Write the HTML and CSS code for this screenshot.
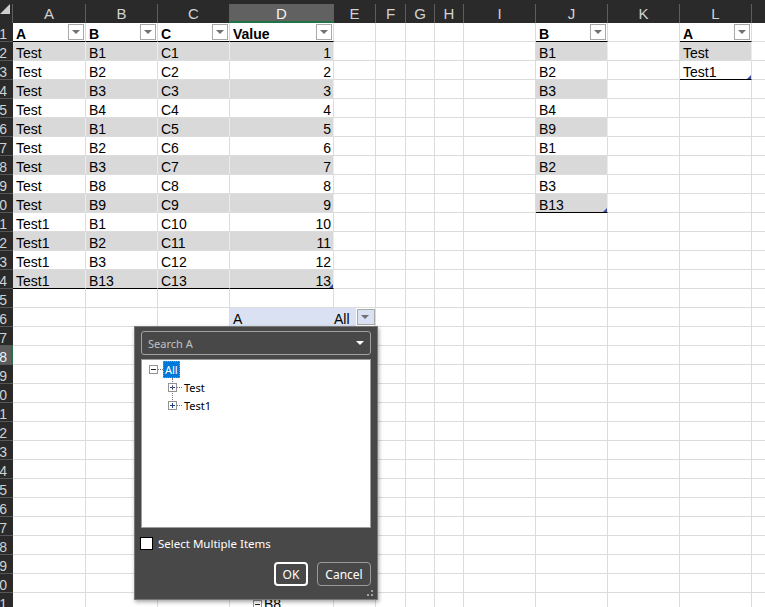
FILE: index.html
```html
<!DOCTYPE html>
<html>

<head>
    <title>Sheet1 - PivotTable Filter</title>
    <link rel="stylesheet" href="styles.css">
</head>

<body>
    <div id="sheet">
        <div id="colHeads" class="row heads"></div>
        <div id="grid"></div>

        <div id="filterMenu">
            <div class="search">
                <span>Search A</span>
                <span class="caret"></span>
            </div>
            <div class="tree">
                <div class="node">
                    <svg class="expander" width="9" height="9"><rect x="0.5" y="0.5" width="8" height="8" fill="#fff" stroke="#939393"/><path d="M2 4.5h5" stroke="#222"/></svg>
                    <span class="dots"></span>
                    <span class="label selected">All</span>
                </div>
                <div class="children">
                    <div class="node child">
                        <svg class="expander" width="9" height="9"><rect x="0.5" y="0.5" width="8" height="8" fill="#fff" stroke="#939393"/><path d="M2 4.5h5M4.5 2v5" stroke="#24418a"/></svg>
                        <span class="dots"></span>
                        <span class="label">Test</span>
                    </div>
                    <div class="node child">
                        <svg class="expander" width="9" height="9"><rect x="0.5" y="0.5" width="8" height="8" fill="#fff" stroke="#939393"/><path d="M2 4.5h5M4.5 2v5" stroke="#24418a"/></svg>
                        <span class="dots"></span>
                        <span class="label">Test1</span>
                    </div>
                </div>
            </div>
            <label class="multi"><span class="box"></span>Select Multiple Items</label>
            <div class="buttons">
                <button class="ok">OK</button>
                <button class="cancel">Cancel</button>
            </div>
            <svg class="grip" width="9" height="9"><rect x="6" y="1" width="2" height="2" fill="#a3a3a3"/><rect x="2" y="5" width="2" height="2" fill="#a3a3a3"/><rect x="6" y="5" width="2" height="2" fill="#a3a3a3"/></svg>
        </div>
    </div>

    <script>
        const colNames = ["A", "B", "C", "D", "E", "F", "G", "H", "I", "J", "K", "L", "M"];
        const rowCount = 31;

        const tables = [
            {
                col: 0, head: ["A", "B", "C", "Value"], rows: [
                    ["Test", "B1", "C1", 1],
                    ["Test", "B2", "C2", 2],
                    ["Test", "B3", "C3", 3],
                    ["Test", "B4", "C4", 4],
                    ["Test", "B1", "C5", 5],
                    ["Test", "B2", "C6", 6],
                    ["Test", "B3", "C7", 7],
                    ["Test", "B8", "C8", 8],
                    ["Test", "B9", "C9", 9],
                    ["Test1", "B1", "C10", 10],
                    ["Test1", "B2", "C11", 11],
                    ["Test1", "B3", "C12", 12],
                    ["Test1", "B13", "C13", 13]
                ]
            },
            {
                col: 9, head: ["B"], rows: [
                    ["B1"], ["B2"], ["B3"], ["B4"], ["B9"], ["B1"], ["B2"], ["B3"], ["B13"]
                ]
            },
            {
                col: 11, head: ["A"], rows: [["Test"], ["Test1"]]
            }
        ];

        const filterButton = '<span class="filter"></span>';
        const minusBox = '<svg class="expander" width="9" height="9"><rect x="0.5" y="0.5" width="8" height="8" fill="#fff" stroke="#939393"/><path d="M2 4.5h5" stroke="#222"/></svg>';

        const colHeads = document.getElementById("colHeads");
        const grid = document.getElementById("grid");

        colHeads.innerHTML = '<div class="corner"><svg width="12" height="19"><polygon points="10,4 10,14 0,14" fill="#cfcfcf"/></svg></div>'
            + colNames.map(c => `<div class="colhead${c === "D" ? " sel" : ""}">${c}</div>`).join("");

        // build the empty sheet
        const cells = [];
        for (let r = 1; r <= rowCount; r++) {
            const row = document.createElement("div");
            row.className = "row";
            row.innerHTML = `<div class="rowhead${r === 18 ? " sel" : ""}">${r}</div>`
                + colNames.map(() => '<div class="cell"></div>').join("");
            grid.appendChild(row);
            cells[r] = row.querySelectorAll(".cell");
        }

        // fill the tables
        tables.forEach(t => {
            t.head.forEach((h, i) => {
                const cell = cells[1][t.col + i];
                cell.classList.add("th");
                cell.innerHTML = `<span>${h}</span>${filterButton}`;
            });
            t.rows.forEach((values, r) => {
                values.forEach((v, i) => {
                    const cell = cells[r + 2][t.col + i];
                    cell.textContent = v;
                    if (r % 2 === 0) cell.classList.add("band");
                    if (typeof v === "number") cell.classList.add("num");
                    if (r === t.rows.length - 1) cell.classList.add("last");
                });
            });
            cells[t.rows.length + 1][t.col + t.head.length - 1].classList.add("handle");
        });

        // pivot table page field and first visible row label
        cells[16][3].classList.add("field");
        cells[16][3].textContent = "A";
        cells[16][4].classList.add("field-value");
        cells[16][4].innerHTML = `<span>All</span>${filterButton}`;
        cells[31][3].classList.add("pivot-row");
        cells[31][3].innerHTML = minusBox + "B8";
    </script>
</body>

</html>
```

FILE: styles.css
```css
body {
    margin: 0;
    background: #fff;
    overflow: hidden;
}

#sheet {
    position: relative;
    width: 765px;
    height: 607px;
    overflow: hidden;
    font-family: "Liberation Sans", Arial, sans-serif;
}

.row {
    display: grid;
    grid-template-columns: 13px 73px 72px 72px 104px 42px 30px 29px 29px 72px 72px 72px 72px 72px;
}

.heads {
    padding-top: 4px;
    background: #2a2a2a;
}

.corner,
.colhead {
    box-sizing: border-box;
    height: 19px;
    border-right: 1px solid #5e5e5e;
}

.corner svg {
    display: block;
    margin-top: -4px;
}

.colhead {
    color: #d2d2d2;
    font-size: 15px;
    line-height: 19px;
    text-align: center;
}

.colhead.sel {
    background: #616161;
    color: #f2f2f2;
    box-shadow: inset 0 -2px 0 #217346;
}

.rowhead {
    box-sizing: border-box;
    height: 19px;
    padding: 5px 6px 0 0;
    background: #2a2a2a;
    border-bottom: 1px solid #565656;
    color: #d2d2d2;
    font-size: 14px;
    line-height: 13px;
    display: flex;
    justify-content: flex-end;
    overflow: hidden;
}

.rowhead.sel {
    background: #5c5c5c;
    color: #f2f2f2;
    box-shadow: inset -2px 0 0 #217346;
}

.cell {
    position: relative;
    box-sizing: border-box;
    height: 19px;
    padding: 5px 3px 0;
    border-right: 1px solid #dcdcdc;
    border-bottom: 1px solid #dcdcdc;
    color: #000;
    font-size: 14px;
    line-height: 13px;
    white-space: nowrap;
    display: flex;
}

.cell.band {
    background: #d9d9d9;
    border-right-color: #ececec;
}

.cell.num {
    justify-content: flex-end;
    padding-right: 2px;
}

.cell.th {
    font-weight: bold;
    padding-right: 1px;
    border-bottom-color: #000;
}

.cell.last {
    border-bottom-color: #000;
}

.cell.handle::after {
    content: "";
    position: absolute;
    right: 0;
    bottom: 0;
    border-style: solid;
    border-width: 0 0 4px 4px;
    border-color: transparent transparent #3d4fa3 transparent;
}

.filter {
    position: relative;
    flex: none;
    box-sizing: border-box;
    width: 16px;
    height: 16px;
    margin: -4px 0 0 auto;
    border: 1px solid #a9a9a9;
    background: #fff;
}

.filter::after {
    content: "";
    position: absolute;
    left: 3px;
    top: 5px;
    border-style: solid;
    border-width: 4px 4px 0;
    border-color: #717171 transparent transparent;
}

.cell.field {
    background: #d9e1f2;
    border-right-color: #d9e1f2;
}

.cell.field-value {
    padding: 0;
}

.field-value span {
    flex: 1;
    padding: 5px 6px 0 0;
    background: #d9e1f2;
    text-align: right;
}

.field-value .filter {
    margin: 1px 0 0 1px;
}

.pivot-row {
    padding-left: 23px;
}

.pivot-row .expander {
    margin: 2px 2px 0 0;
}

#filterMenu {
    position: absolute;
    left: 134px;
    top: 326px;
    width: 244px;
    height: 274px;
    box-sizing: border-box;
    padding: 4px 6px;
    background: #484848;
    border: 1px solid #787878;
    box-shadow: 1px 2px 4px rgba(0, 0, 0, 0.35);
    color: #fff;
    font-family: "Noto Sans", sans-serif;
    font-size: 11px;
    display: flex;
    flex-direction: column;
}

.search {
    height: 24px;
    box-sizing: border-box;
    padding: 0 6px;
    border: 1px solid #a0a0a0;
    border-radius: 3px;
    color: #c2c2c2;
    display: flex;
    align-items: center;
    justify-content: space-between;
}

.caret {
    border-style: solid;
    border-width: 4px 4px 0;
    border-color: #fff transparent transparent;
}

.tree {
    height: 169px;
    box-sizing: border-box;
    margin-top: 4px;
    border: 1px solid #9c9c9c;
    background: #fff;
    color: #000;
}

.node {
    height: 18px;
    padding-left: 7px;
    display: flex;
    align-items: center;
}

.node.child {
    padding-left: 26px;
}

.expander {
    display: block;
    flex: none;
}

.dots {
    width: 5px;
    border-top: 1px dotted #7a7a7a;
}

.label {
    padding: 0 1px;
    border: 1px solid transparent;
    line-height: 15px;
}

.label.selected {
    background: #0078d7;
    color: #fff;
    border: 1px dotted #d58a24;
}

.children {
    position: relative;
}

.children::before {
    content: "";
    position: absolute;
    left: 30px;
    top: 0;
    height: 24px;
    border-left: 1px dotted #7a7a7a;
}

.multi {
    height: 13px;
    margin-top: 9px;
    margin-left: -1px;
    font-size: 11.5px;
    line-height: 13px;
    display: flex;
    align-items: center;
    gap: 5px;
}

.box {
    width: 13px;
    height: 13px;
    box-sizing: border-box;
    border: 1px solid #000;
    background: #fff;
}

.buttons {
    margin-top: 12px;
    display: flex;
    justify-content: flex-end;
    gap: 9px;
}

.buttons button {
    height: 24px;
    padding: 0;
    background: #484848;
    border: 1px solid #9a9a9a;
    border-radius: 4px;
    color: #fff;
    font-family: "Noto Sans", sans-serif;
    font-size: 12px;
}

.buttons .ok {
    width: 34px;
    border: 2px solid #fff;
}

.buttons .cancel {
    width: 54px;
}

.grip {
    position: absolute;
    right: 3px;
    bottom: 1px;
}
```
